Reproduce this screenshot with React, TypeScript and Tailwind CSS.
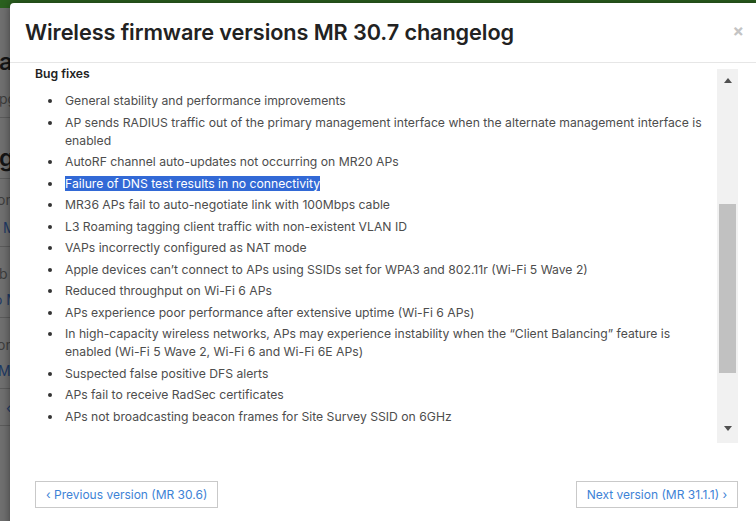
import React from 'react';

const fixes: React.ReactNode[] = [
  'General stability and performance improvements',
  'AP sends RADIUS traffic out of the primary management interface when the alternate management interface is enabled',
  'AutoRF channel auto-updates not occurring on MR20 APs',
  <span className="bg-[#3269d6] text-white">Failure of DNS test results in no connectivity</span>,
  'MR36 APs fail to auto-negotiate link with 100Mbps cable',
  'L3 Roaming tagging client traffic with non-existent VLAN ID',
  'VAPs incorrectly configured as NAT mode',
  'Apple devices can’t connect to APs using SSIDs set for WPA3 and 802.11r (Wi-Fi 5 Wave 2)',
  'Reduced throughput on Wi-Fi 6 APs',
  'APs experience poor performance after extensive uptime (Wi-Fi 6 APs)',
  'In high-capacity wireless networks, APs may experience instability when the “Client Balancing” feature is enabled (Wi-Fi 5 Wave 2, Wi-Fi 6 and Wi-Fi 6E APs)',
  'Suspected false positive DFS alerts',
  'APs fail to receive RadSec certificates',
  'APs not broadcasting beacon frames for Site Survey SSID on 6GHz',
];

// the page behind the dialog, only a thin strip of it shows
function BackgroundPage() {
  return (
    <div className="flex flex-col font-['Inter',sans-serif] whitespace-nowrap">
      <div className="h-[8px] bg-[#2b611f]" />
      <div className="mt-[40px] ml-[-1px] text-[24px] leading-[28px] font-semibold text-[#151515]">a</div>
      <div className="mt-[14px] ml-[-1px] text-[14px] leading-[18px] text-[#3e3e3e]">pg</div>
      <div className="mt-[9px] h-px bg-[#5c5c5c]" />
      <div className="mt-[26px] ml-[-1px] text-[24px] leading-[28px] font-semibold text-[#151515]">g</div>
      <div className="mt-[6px] h-px bg-[#5c5c5c]" />
      <div className="mt-[12px] ml-[-3px] text-[14px] leading-[18px] text-[#3e3e3e]">on</div>
      <div className="mt-[10px] ml-[3px] text-[14px] leading-[18px] text-[#1f3a66]">M</div>
      <div className="mt-[9px] h-px bg-[#5c5c5c]" />
      <div className="mt-[18px] ml-[-1px] text-[14px] leading-[18px] text-[#3e3e3e]">b</div>
      <div className="mt-[8px] ml-[-6px] text-[14px] leading-[18px] text-[#1f3a66]">o M</div>
      <div className="mt-[8px] h-px bg-[#5c5c5c]" />
      <div className="mt-[18px] ml-[-3px] text-[14px] leading-[18px] text-[#3e3e3e]">on</div>
      <div className="mt-[8px] ml-[-2px] text-[14px] leading-[18px] text-[#1f3a66]">MF</div>
      <div className="mt-[8px] h-px bg-[#5c5c5c]" />
      <div className="mt-[10px] ml-[6px] text-[14px] leading-[18px] text-[#1f3a66]">‹</div>
      <div className="mt-[8px] h-px bg-[#5c5c5c]" />
    </div>
  );
}

function FakeScrollbar() {
  return (
    <div className="mt-[6px] flex h-[374px] w-[21px] flex-col items-center bg-[#f1f1f1]">
      <div className="mt-[9px] h-0 w-0 border-x-[4px] border-b-[5px] border-x-transparent border-b-[#505050]" />
      <div className="mt-[121px] h-[169px] w-[17px] bg-[#c1c1c1]" />
      <div className="mt-[53px] h-0 w-0 border-x-[4px] border-t-[5px] border-x-transparent border-t-[#505050]" />
    </div>
  );
}

export default function App() {
  return (
    <div className="relative h-[521px] w-[756px] overflow-hidden bg-[#707070]">
      <BackgroundPage />

      <div className="absolute left-[10px] top-[3px] h-[560px] w-[753px] rounded-tl-[4px] bg-white font-['Inter',sans-serif] shadow-[0_0_10px_rgba(0,0,0,0.45)]">
        <div className="flex h-[60px] items-center justify-between border-b border-[#e6e6e6] pl-[15px] pr-[19px]">
          <h1 className="text-[21.7px] font-semibold tracking-[-0.1px] text-[#222]">
            Wireless firmware versions MR 30.7 changelog
          </h1>
          <span className="pb-[3px] text-[17px] font-bold leading-none text-[#c4c4c4]">×</span>
        </div>

        <div className="flex px-[25px]">
          <div className="h-[377px] flex-1 overflow-hidden pr-[6px] pt-[2px]">
            <div className="text-[12.2px] font-semibold leading-[18px] text-[#222]">Bug fixes</div>
            <ul className="mt-[9px]">
              {fixes.map((f, i) => (
                <li key={i} className="mb-[3.5px] flex text-[12.2px] leading-[18px] text-[#4d4d4d]">
                  <span className="flex h-[18px] w-[30px] shrink-0 items-center pl-[13px]">
                    <span className="h-[4px] w-[4px] rounded-full bg-[#333]" />
                  </span>
                  <span>{f}</span>
                </li>
              ))}
            </ul>
          </div>
          <FakeScrollbar />
        </div>

        <div className="flex justify-between px-[25px] pt-[38px] text-[12px] text-[#3d82d6]">
          <button className="h-[27px] border border-[#c9c9c9] bg-white px-[10px]">‹ Previous version (MR 30.6)</button>
          <button className="h-[27px] border border-[#c9c9c9] bg-white px-[10px]">Next version (MR 31.1.1) ›</button>
        </div>
      </div>
    </div>
  );
}
